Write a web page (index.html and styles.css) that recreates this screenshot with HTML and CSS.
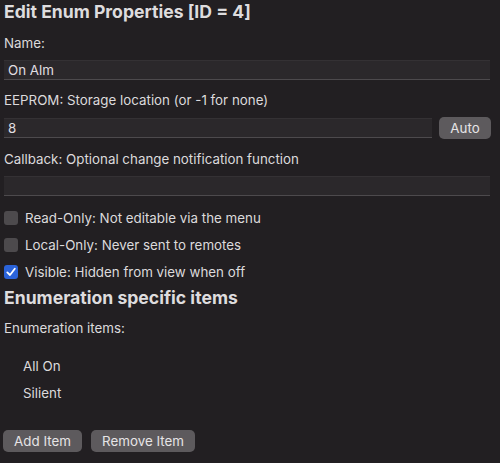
FILE: index.html
```html
<!DOCTYPE html>
<html>
<head>
<meta charset="utf-8">
<link rel="stylesheet" href="styles.css">
</head>
<body>
<div class="page">
  <h1 class="title">Edit Enum Properties [ID = 4]</h1>
  <div class="label">Name:</div>
  <div class="field">On Alm</div>
  <div class="label">EEPROM: Storage location (or -1 for none)</div>
  <div class="row">
    <div class="field grow">8</div>
    <button class="btn auto">Auto</button>
  </div>
  <div class="label">Callback: Optional change notification function</div>
  <div class="field"></div>
  <div class="checks">
    <div class="check"><span class="box"></span>Read-Only: Not editable via the menu</div>
    <div class="check"><span class="box"></span>Local-Only: Never sent to remotes</div>
    <div class="check"><span class="box on"><svg viewBox="0 0 14 14" width="14" height="14"><path d="M3.3 7.4 L6 10 L10.8 3.8" fill="none" stroke="#fff" stroke-width="1.8" stroke-linecap="round" stroke-linejoin="round"/></svg></span>Visible: Hidden from view when off</div>
  </div>
  <h2 class="title sub">Enumeration specific items</h2>
  <div class="label">Enumeration items:</div>
  <ul class="items">
    <li>All On</li>
    <li>Silient</li>
  </ul>
  <div class="buttons">
    <button class="btn add">Add Item</button>
    <button class="btn remove">Remove Item</button>
  </div>
</div>
</body>
</html>
```

FILE: styles.css
```css
html, body {
  margin: 0;
  padding: 0;
  background: #221f22;
}
body {
  width: 500px;
  height: 463px;
  overflow: hidden;
  font-family: Inter, "Noto Sans", sans-serif;
  font-size: 13.35px;
  color: #dcdadc;
}
.page {
  padding: 1px 4px 0 4px;
  display: flex;
  flex-direction: column;
}
.title {
  margin: 0;
  font-size: 17.6px;
  font-weight: 700;
  color: #dedcde;
  line-height: 22px;
}
.label {
  line-height: 18px;
  margin-top: 11px;
  margin-bottom: 8px;
}
.field {
  height: 20px;
  box-sizing: border-box;
  background: #2b282b;
  border-top: 1px solid #343134;
  border-bottom: 1px solid #4d4a4d;
  padding: 0 4px;
  line-height: 18px;
  color: #e0dee0;
  width: 486px;
}
.row {
  display: flex;
  align-items: center;
  gap: 7px;
}
.field.grow {
  width: 428px;
}
.btn {
  font-family: inherit;
  font-size: 13.35px;
  color: #e6e4e6;
  background: #5d5a5d;
  border: none;
  border-radius: 5px;
  height: 22px;
  padding: 0;
  line-height: 22px;
}
.auto {
  width: 52px;
}
.add {
  width: 79px;
  margin-left: -1px;
}
.remove {
  width: 104px;
}
.checks {
  margin-top: 13px;
  display: flex;
  flex-direction: column;
  gap: 9px;
}
.check {
  display: flex;
  align-items: center;
  gap: 7px;
  line-height: 18px;
}
.box {
  width: 14px;
  height: 14px;
  border-radius: 3px;
  background: #4d4a4d;
  display: inline-flex;
}
.box.on {
  background: #2b63d9;
}
.sub {
  margin-top: 6px;
}
.items {
  list-style: none;
  margin: 0;
  padding: 0 0 0 19px;
  display: flex;
  flex-direction: column;
  gap: 9px;
}
.sub + .label {
  margin-top: 10px;
  margin-bottom: 20px;
}
.items li {
  line-height: 18px;
}
.buttons {
  margin-top: 28px;
  display: flex;
  gap: 9px;
}
```
